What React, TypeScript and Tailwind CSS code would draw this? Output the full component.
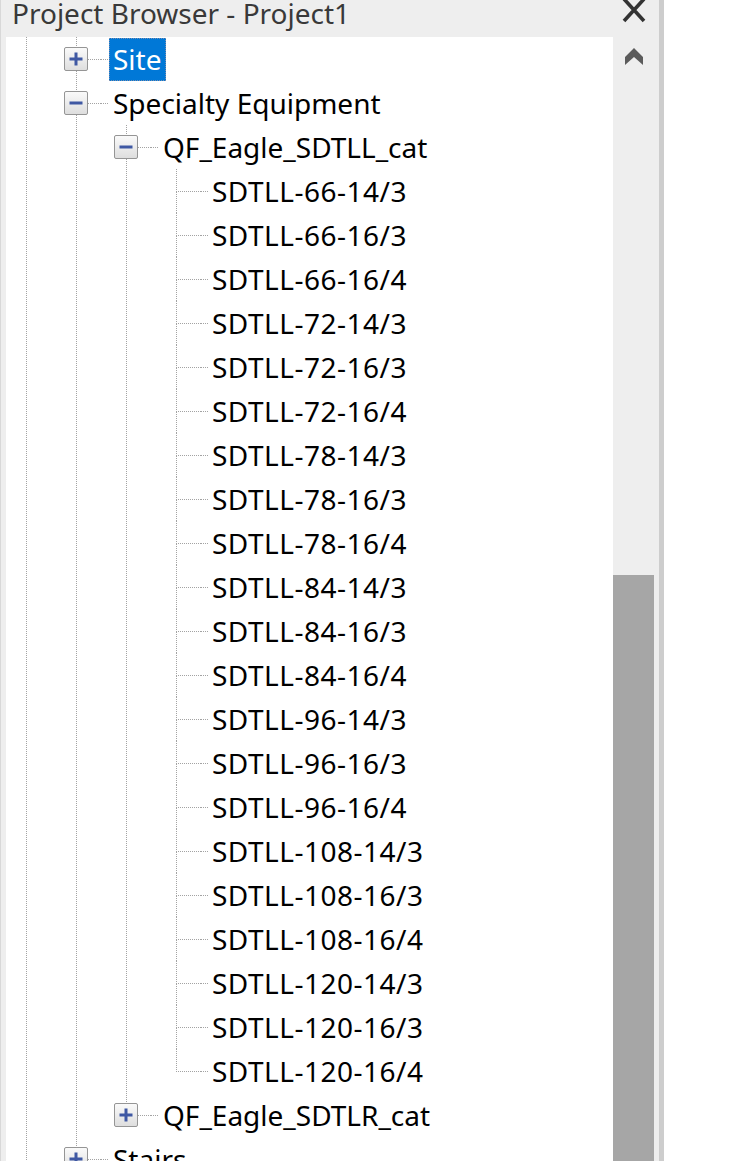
import React from "react";

type Row = {
  label: string;
  depth: number;
  expander?: "plus" | "minus";
  guides: boolean[];
  hasNext: boolean;
  selected?: boolean;
};

const sizes = ["66", "72", "78", "84", "96", "108", "120"];
const variants = ["14/3", "16/3", "16/4"];
const leafLabels = sizes.flatMap((s) => variants.map((v) => `SDTLL-${s}-${v}`));

const rows: Row[] = [
  { label: "Site", depth: 1, expander: "plus", guides: [true], hasNext: true, selected: true },
  { label: "Specialty Equipment", depth: 1, expander: "minus", guides: [true], hasNext: true },
  { label: "QF_Eagle_SDTLL_cat", depth: 2, expander: "minus", guides: [true, true], hasNext: true },
  ...leafLabels.map((label, i) => ({
    label,
    depth: 3,
    guides: [true, true, true],
    hasNext: i < leafLabels.length - 1,
  })),
  { label: "QF_Eagle_SDTLR_cat", depth: 2, expander: "plus", guides: [true, true], hasNext: false },
  { label: "Stairs", depth: 1, expander: "plus", guides: [true], hasNext: true },
];

// 1px-on / 1px-off dotted guide lines
const vDots = "w-px bg-[linear-gradient(#a3a3a3_50%,transparent_50%)] bg-[length:1px_2px]";
const hDots = "h-px bg-[linear-gradient(to_right,#a3a3a3_50%,transparent_50%)] bg-[length:2px_1px]";

function Expander({ kind }: { kind: "plus" | "minus" }) {
  return (
    <div className="flex h-[24px] w-[24px] shrink-0 items-center justify-center rounded-[2px] border border-[#959595] bg-[linear-gradient(#fafafa,#dedede)]">
      <svg width="14" height="14" viewBox="0 0 14 14" aria-hidden="true">
        <rect x="0.5" y="5.5" width="13" height="3" fill="#3f58a3" />
        {kind === "plus" && <rect x="5.5" y="0.5" width="3" height="13" fill="#3f58a3" />}
      </svg>
    </div>
  );
}

function NodeCell({ row }: { row: Row }) {
  return (
    <div className="flex w-[50px] shrink-0 flex-col">
      <div className="flex flex-1 justify-center">
        <div className={vDots} />
      </div>
      {row.expander ? (
        <div className="flex h-[24px] items-center">
          <div className="w-[13px] shrink-0" />
          <Expander kind={row.expander} />
          <div className={`flex-1 ${hDots}`} />
        </div>
      ) : (
        <div className="flex h-px">
          <div className="w-[25px] shrink-0" />
          <div className={`flex-1 ${hDots}`} />
        </div>
      )}
      <div className="flex flex-1 justify-center">{row.hasNext && <div className={vDots} />}</div>
    </div>
  );
}

function TreeRow({ row }: { row: Row }) {
  return (
    <div className="flex h-[44px] shrink-0">
      {row.guides.map((on, i) => (
        <div key={i} className="flex w-[50px] shrink-0 justify-center">
          {on && <div className={vDots} />}
        </div>
      ))}
      <NodeCell row={row} />
      <div className="flex w-[8px] shrink-0 items-center">
        <div className={`w-full ${hDots}`} />
      </div>
      <div className="flex items-center">
        <span
          className={
            row.selected
              ? "flex h-[43px] items-center border border-dotted border-[#7a8fb0] bg-[#0078d7] px-[3px] text-white"
              : row.expander
                ? "px-[4px] text-black"
                : "pl-[3px] pr-[4px] tracking-[0.5px] text-black"
          }
        >
          {row.label}
        </span>
      </div>
    </div>
  );
}

export default function App() {
  return (
    <div className="flex h-[1161px] w-[756px] overflow-hidden bg-white font-['Noto_Sans','Open_Sans',sans-serif]">
      <div className="flex w-[664px] shrink-0 flex-col border-r-[5px] border-l border-[#cdcdcd] border-l-[#d8d8d8] bg-[#eeeeee]">
        {/* Title bar */}
        <div className="flex h-[37px] shrink-0 items-start justify-between">
          <div className="pl-[11px] text-[28px] leading-[26px] text-[#393939]">Project Browser - Project1</div>
          <svg width="26" height="24" viewBox="0 0 26 24" className="mr-[12px]" aria-hidden="true">
            <path d="M3 -1 L23 21 M23 -1 L3 21" stroke="#333333" strokeWidth="3.6" />
          </svg>
        </div>

        <div className="flex min-h-0 flex-1">
          {/* Tree */}
          <div className="ml-[5px] flex w-[607px] shrink-0 flex-col overflow-hidden bg-white text-[28px]">
            <div className="ml-[-5px] flex flex-col">
              {rows.map((r, i) => (
                <TreeRow key={i} row={r} />
              ))}
            </div>
          </div>

          {/* Vertical scrollbar */}
          <div className="flex w-[46px] shrink-0 flex-col">
            <div className="flex h-[538px] shrink-0 justify-center pt-[11px]">
              <svg width="20" height="18" viewBox="0 0 20 18" className="ml-[-5px]" aria-hidden="true">
                <polygon points="10,0 19,9 19,17 10,9 1,17 1,9" fill="#5b5b5b" />
              </svg>
            </div>
            <div className="mr-[5px] flex-1 bg-[#a6a6a6]" />
          </div>
        </div>
      </div>
    </div>
  );
}
